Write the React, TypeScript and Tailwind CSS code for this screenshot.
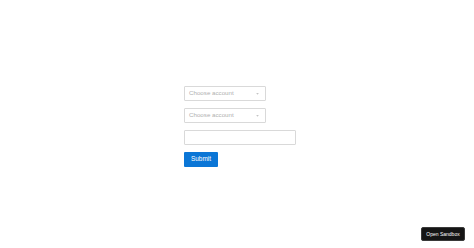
import React from 'react'

const font = { fontFamily: '"Liberation Sans", Arial, sans-serif' }

function AccountSelect() {
  return (
    <div className="relative flex h-[15px] w-[82px] items-center rounded-[1px] border border-[#d9d9d9] bg-white pl-[4px]">
      <span className="text-[6.2px] leading-none text-[#b0b0b0]">Choose account</span>
      <svg className="absolute right-[6px] top-[6px]" width="3" height="2" viewBox="0 0 4 3">
        <path d="M0 0 L4 0 L2 2.5 Z" fill="#c4c4c4" />
      </svg>
    </div>
  )
}

export default function App() {
  return (
    <div className="relative h-[248px] w-[474px] bg-white" style={font}>
      <form className="flex flex-col gap-[7px] pl-[184px] pt-[86px]" onSubmit={(e) => e.preventDefault()}>
        <AccountSelect />
        <AccountSelect />
        <input
          type="text"
          className="h-[15px] w-[112px] rounded-[1px] border border-[#d9d9d9] bg-white outline-none"
        />
        <button
          type="submit"
          className="h-[15px] w-[34px] rounded-[1px] bg-[#0b76d6] text-[6.4px] leading-none text-white"
        >
          Submit
        </button>
      </form>

      {/* floating sandbox link */}
      <button className="absolute left-[421px] top-[227px] flex h-[14px] w-[44px] items-center justify-center rounded-[2px] border border-[#3a3a3a] bg-[#151515] text-[5px] leading-none text-white">
        Open Sandbox
      </button>
    </div>
  )
}
